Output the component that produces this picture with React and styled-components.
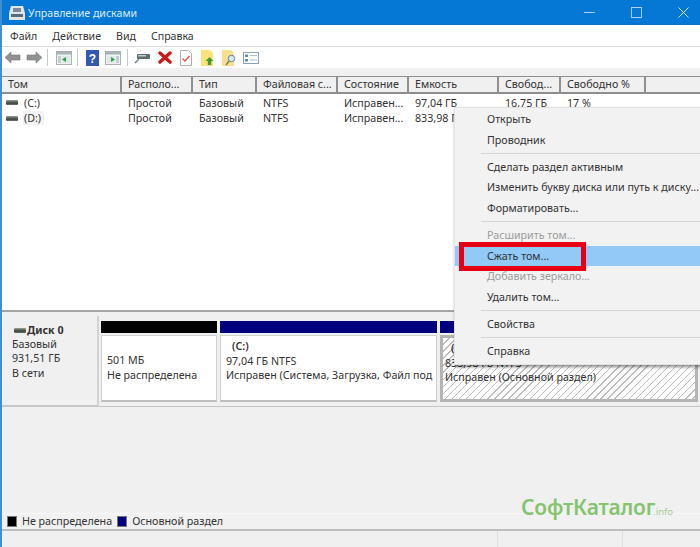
import React from "react";
import styled, { createGlobalStyle } from "styled-components";

const GlobalStyle = createGlobalStyle`
  html, body { margin: 0; padding: 0; background: #f0f0f0; }
  body { font-family: "Noto Sans", "Open Sans", "Liberation Sans", sans-serif; }
`;

const Window = styled.div`
  position: relative;
  width: 700px;
  height: 547px;
  overflow: hidden;
  display: flex;
  flex-direction: column;
  box-sizing: border-box;
  border-left: 2px solid #3f8fd2;
  background: #f0f0f0;
  color: #333;
  font-size: 10.7px;
`;

const TitleBar = styled.div`
  height: 25px;
  margin: 0 -6px 0 -2px;
  flex: none;
  background: #0478d4;
  color: #dcecf9;
  display: flex;
  align-items: center;
  padding-left: 8px;
  gap: 2px;
  font-size: 10.6px;
`;
const TitleText = styled.div`
  flex: 1;
`;
const WinButton = styled.div`
  width: 45px;
  height: 25px;
  display: flex;
  align-items: center;
  justify-content: center;
`;

const MenuBar = styled.div`
  height: 21px;
  flex: none;
  background: #fff;
  display: flex;
  align-items: center;
  padding-left: 8px;
  gap: 15px;
  font-size: 10.6px;
  border-bottom: 1px solid #dadada;
`;

const Toolbar = styled.div`
  height: 21px;
  flex: none;
  background: #fff;
  display: flex;
  align-items: center;
`;
const Tool = styled.div`
  width: ${(p) => p.$w}px;
  height: 20px;
  flex: none;
  display: flex;
  align-items: center;
  justify-content: center;
`;
const ToolSep = styled.div`
  width: 1px;
  height: 17px;
  flex: none;
  margin: 0 5px 0 2px;
  background: #c8c8c8;
`;

const Gap = styled.div`
  height: 8px;
  flex: none;
  background: #f0f0f0;
`;

const TableHead = styled.div`
  height: 18px;
  flex: none;
  display: flex;
  background: #f0f0f0;
  border-top: 1px solid #8f8f8f;
  border-bottom: 2px solid #8f8f8f;
  box-sizing: border-box;
`;
const HeadCell = styled.div`
  width: ${(p) => p.$w}px;
  box-sizing: border-box;
  padding-left: 6px;
  border-right: 2px solid #8f8f8f;
  line-height: 15px;
  white-space: nowrap;
  overflow: hidden;
`;

const TableBody = styled.div`
  height: 216px;
  flex: none;
  background: #fff;
  padding-top: 1px;
  box-sizing: border-box;
`;
const Row = styled.div`
  height: 15.5px;
  display: flex;
  align-items: center;
`;
const Cell = styled.div`
  width: ${(p) => p.$w}px;
  box-sizing: border-box;
  padding-left: 6px;
  white-space: nowrap;
  overflow: hidden;
  flex: none;
`;
const VolumeCell = styled(Cell)`
  display: flex;
  align-items: center;
  padding-left: 4px;
  gap: 5px;
`;
const VolumeName = styled.span`
  padding: 0 3px 0 1px;
  background: ${(p) => (p.$selected ? "#f3f3f3" : "transparent")};
`;
const DriveIcon = styled.span`
  display: inline-block;
  width: 12px;
  height: 5px;
  flex: none;
  border-radius: 1px;
  background: linear-gradient(#9aa39a, #3c443c 60%, #6b736b);
`;

const Splitter = styled.div`
  height: 6px;
  flex: none;
  background: #f0f0f0;
  border-top: 2px solid #a5a5a5;
  box-sizing: border-box;
`;

const DiskArea = styled.div`
  flex: 1;
  display: flex;
  flex-direction: column;
  background: #f0f0f0;
`;
const DiskRow = styled.div`
  display: flex;
  height: 91px;
  flex: none;
  border-bottom: 1px solid #c4c4c4;
  box-sizing: border-box;
`;
const DiskInfo = styled.div`
  width: 97px;
  flex: none;
  box-sizing: border-box;
  padding: 7px 0 0 10px;
  line-height: 14.2px;
  background: #f0f0f0;
  border-right: 2px solid #d2d2d2;
  border-bottom: 2px solid #c6c6c6;
  margin-bottom: -1px;
`;
const DiskTitle = styled.div`
  display: flex;
  align-items: center;
  gap: 1px;
  font-weight: 700;
  margin-left: 2px;
`;
const Partitions = styled.div`
  flex: 1;
  display: flex;
  gap: 3px;
  padding: 5px 0 0 2px;
  overflow: hidden;
`;
const Partition = styled.div`
  width: ${(p) => p.$w}px;
  flex: none;
  display: flex;
  flex-direction: column;
`;
const PartitionBar = styled.div`
  height: 12px;
  flex: none;
  background: ${(p) => p.$color};
`;
const PartitionBox = styled.div`
  height: 67px;
  margin-top: 2px;
  box-sizing: border-box;
  padding: ${(p) => (p.$top ? "3px" : "17px")} 0 0 5px;
  line-height: 14.5px;
  white-space: nowrap;
  overflow: hidden;
  border: 1px solid #cfcfcf;
  border-bottom: 2px solid #bdbdbd;
  background: #fff;
`;
const HatchedBox = styled(PartitionBox)`
  border: 3px solid #b4b4b4;
  padding-left: 2px;
  background: repeating-linear-gradient(
    135deg,
    #fff 0,
    #fff 4px,
    #bcbcbc 4px,
    #bcbcbc 5px
  );
`;
const BoxLabel = styled.div`
  padding-left: 6px;
  font-weight: 600;
`;

const Legend = styled.div`
  height: 18px;
  flex: none;
  margin-top: auto;
  display: flex;
  align-items: center;
  padding: 0 0 1px 5px;
  gap: 5px;
  background: #f1f1f1;
  border-top: 1px solid #f7f7f7;
  border-bottom: 2px solid #bdbdbd;
  box-sizing: border-box;
`;
const Swatch = styled.span`
  width: 10px;
  height: 11px;
  background: ${(p) => p.$color};
  border: 1px solid #777;
  box-sizing: border-box;
`;
const StatusBar = styled.div`
  height: 16px;
  flex: none;
  display: flex;
  justify-content: flex-end;
  background: #f0f0f0;
`;
const StatusCell = styled.div`
  width: ${(p) => p.$w}px;
  border-left: 1px solid #dedede;
  box-sizing: border-box;
`;

/* overlays */
const ContextMenu = styled.div`
  position: absolute;
  left: 452px;
  top: 107px;
  width: 260px;
  height: 258px;
  box-sizing: border-box;
  padding-top: 1px;
  background: #f2f2f2;
  border: 1px solid #e2e2e2;
  box-shadow: 1px 2px 3px rgba(0, 0, 0, 0.45);
`;
const MenuItem = styled.div`
  height: 20.6px;
  line-height: 20px;
  padding-left: 32px;
  white-space: nowrap;
  color: ${(p) => (p.$disabled ? "#9c9c9c" : "#333")};
  background: ${(p) => (p.$active ? "#91c9f7" : "transparent")};
`;
const MenuSep = styled.div`
  height: 1px;
  margin: 3px 0 2.5px 26px;
  background: #d4d4d4;
`;
const RedFrame = styled.div`
  position: absolute;
  left: 457px;
  top: 242px;
  width: 127px;
  height: 29px;
  box-sizing: border-box;
  border: 5px solid #e60012;
`;
const Watermark = styled.div`
  position: absolute;
  left: 519px;
  top: 493px;
  color: #85c46e;
  font-size: 21px;
  font-weight: 600;
  letter-spacing: -0.2px;
  white-space: nowrap;
`;
const WatermarkSmall = styled.span`
  margin-left: -2px;
  font-size: 9.5px;
  font-weight: 400;
  letter-spacing: 0;
  color: #a5c99a;
`;

const columns = [120, 71, 64, 81, 71, 90, 62, 85];
const headers = ["Том", "Располо...", "Тип", "Файловая с...", "Состояние", "Емкость", "Свобод...", "Свободно %"];
const rows = [
  { name: "(C:)", cap: "97,04 ГБ", free: "16,75 ГБ", pct: "17 %" },
  { name: "(D:)", cap: "833,98 ГБ", free: "", pct: "", selected: true },
];

const menu = [
  { t: "Открыть" }, { t: "Проводник" }, { sep: true },
  { t: "Сделать раздел активным" },
  { t: "Изменить букву диска или путь к диску..." },
  { t: "Форматировать..." }, { sep: true },
  { t: "Расширить том...", off: true },
  { t: "Сжать том...", active: true },
  { t: "Добавить зеркало...", off: true },
  { t: "Удалить том..." }, { sep: true },
  { t: "Свойства" }, { sep: true },
  { t: "Справка" },
];

const Arrow = ({ flip }) => (
  <svg width="17" height="13" viewBox="0 0 17 13" style={flip ? { transform: "scaleX(-1)" } : undefined}>
    <path d="M1 6.5 7 1v3h9v5H7v3z" fill="#8f938f" stroke="#777" strokeWidth=".6" />
  </svg>
);
const Panel = ({ bar, right }) => (
  <svg width="16" height="14" viewBox="0 0 16 14">
    <rect x=".5" y=".5" width="15" height="13" fill="#eef2f2" stroke="#a9b0b0" />
    <rect x="1" y="1" width="14" height="2.5" fill="#a9b4b8" />
    <rect x={right ? 11 : 2} y="5" width="3" height="7" fill="#c3cdd0" />
    <rect x={right ? 2 : 6} y="5" width="8" height="7" fill="#dfe8e4" />
    <path d={right ? "M6 6l4 2.5L6 11z" : "M10 6 6 8.5l4 2.5z"} fill={bar} />
  </svg>
);
const Help = () => (
  <svg width="13" height="16" viewBox="0 0 13 16">
    <rect width="13" height="16" fill="#3558b0" />
    <text x="6.5" y="12.5" fontSize="12" fontWeight="700" fill="#fff" textAnchor="middle" fontFamily="Liberation Sans">?</text>
  </svg>
);
const Rescan = () => (
  <svg width="16" height="13" viewBox="0 0 16 13">
    <path d="M1 12 5 8" stroke="#7c8a8a" strokeWidth="1.6" />
    <rect x="3" y="3" width="13" height="5" rx="1" fill="#5e6c6c" />
    <rect x="4" y="4" width="8" height="1.5" fill="#b7d0d8" />
  </svg>
);
const Cross = () => (
  <svg width="14" height="13" viewBox="0 0 14 13">
    <path d="M2 2l10 9M12 2 2 11" stroke="#cc1717" strokeWidth="3.4" strokeLinecap="round" />
  </svg>
);
const Check = () => (
  <svg width="12" height="16" viewBox="0 0 12 16">
    <path d="M.5.5h8l3 3v12H.5z" fill="#fff" stroke="#b0b0b0" />
    <path d="M2.5 8.5 5 11l4.5-5" stroke="#d9534a" strokeWidth="1.3" fill="none" />
  </svg>
);
const FolderUp = () => (
  <svg width="14" height="16" viewBox="0 0 14 16">
    <path d="M0 0h9l3 3v13H0z" fill="#fbe27a" />
    <path d="M8.5 7l4 4h-2.3v4H6.8v-4H4.5z" fill="#3f9a2f" />
  </svg>
);
const FolderSearch = () => (
  <svg width="15" height="16" viewBox="0 0 15 16">
    <path d="M0 0h9l3 3v13H0z" fill="#f8e08e" />
    <circle cx="9.5" cy="8.5" r="3.2" fill="#d9ecf4" stroke="#5f7f94" />
    <path d="M7 11l-3 4" stroke="#7a8a5a" strokeWidth="1.6" />
  </svg>
);
const Props = () => (
  <svg width="16" height="12" viewBox="0 0 16 12">
    <rect x=".5" y=".5" width="15" height="11" fill="#fff" stroke="#8aa2b8" />
    <rect x="2" y="2.5" width="3" height="2.5" fill="#5b8dc4" />
    <rect x="2" y="7" width="3" height="2.5" fill="#5b8dc4" />
    <path d="M7 3.5h7M7 8h7" stroke="#b4bcc4" />
  </svg>
);

const App = () => (
  <Window>
    <GlobalStyle />
    <TitleBar>
      <svg width="18" height="16" viewBox="0 0 18 16">
        <path d="M3 1h12l2 7v7H1V8z" fill="#dfe6ea" />
        <rect x="3" y="9" width="12" height="3" fill="#5a6b78" />
        <rect x="5" y="3" width="8" height="4" fill="#7d8b96" />
      </svg>
      <TitleText>Управление дисками</TitleText>
      <WinButton>
        <svg width="11" height="11" viewBox="0 0 11 11"><path d="M0 5.5h11" stroke="#a9d2f2" /></svg>
      </WinButton>
      <WinButton>
        <svg width="11" height="11" viewBox="0 0 11 11"><rect x=".5" y=".5" width="10" height="10" fill="none" stroke="#a9d2f2" /></svg>
      </WinButton>
      <WinButton>
        <svg width="11" height="11" viewBox="0 0 11 11"><path d="M.5.5l10 10M10.5.5l-10 10" stroke="#cfe5f7" /></svg>
      </WinButton>
    </TitleBar>
    <MenuBar>
      <span>Файл</span><span>Действие</span><span>Вид</span><span>Справка</span>
    </MenuBar>
    <Toolbar>
      <Tool $w={21}><Arrow /></Tool>
      <Tool $w={22}><Arrow flip /></Tool>
      <ToolSep />
      <Tool $w={22}><Panel bar="#2fa04a" /></Tool>
      <ToolSep />
      <Tool $w={18}><Help /></Tool>
      <Tool $w={24}><Panel bar="#2fa04a" right /></Tool>
      <ToolSep />
      <Tool $w={18}><Rescan /></Tool>
      <Tool $w={27}><Cross /></Tool>
      <Tool $w={16}><Check /></Tool>
      <Tool $w={27}><FolderUp /></Tool>
      <Tool $w={17}><FolderSearch /></Tool>
      <Tool $w={25}><Props /></Tool>
    </Toolbar>
    <Gap />
    <TableHead>
      {headers.map((h, i) => (
        <HeadCell key={h} $w={columns[i]}>{h}</HeadCell>
      ))}
    </TableHead>
    <TableBody>
      {rows.map((r) => (
        <Row key={r.name}>
          <VolumeCell $w={columns[0]}>
            <DriveIcon />
            <VolumeName $selected={r.selected}>{r.name}</VolumeName>
          </VolumeCell>
          <Cell $w={columns[1]}>Простой</Cell>
          <Cell $w={columns[2]}>Базовый</Cell>
          <Cell $w={columns[3]}>NTFS</Cell>
          <Cell $w={columns[4]}>Исправен...</Cell>
          <Cell $w={columns[5]}>{r.cap}</Cell>
          <Cell $w={columns[6]}>{r.free}</Cell>
          <Cell $w={columns[7]}>{r.pct}</Cell>
        </Row>
      ))}
    </TableBody>
    <Splitter />
    <DiskArea>
      <DiskRow>
        <DiskInfo>
          <DiskTitle><DriveIcon />Диск 0</DiskTitle>
          <div>Базовый</div>
          <div>931,51 ГБ</div>
          <div>В сети</div>
        </DiskInfo>
        <Partitions>
          <Partition $w={116}>
            <PartitionBar $color="#000" />
            <PartitionBox>
              <div>501 МБ</div>
              <div>Не распределена</div>
            </PartitionBox>
          </Partition>
          <Partition $w={217}>
            <PartitionBar $color="#00007f" />
            <PartitionBox $top>
              <BoxLabel>(C:)</BoxLabel>
              <div>97,04 ГБ NTFS</div>
              <div>Исправен (Система, Загрузка, Файл под</div>
            </PartitionBox>
          </Partition>
          <Partition $w={258}>
            <PartitionBar $color="#00007f" />
            <HatchedBox $top>
              <BoxLabel>(D:)</BoxLabel>
              <div>833,98 ГБ NTFS</div>
              <div>Исправен (Основной раздел)</div>
            </HatchedBox>
          </Partition>
        </Partitions>
      </DiskRow>
      <Legend>
        <Swatch $color="#000" />
        <span>Не распределена</span>
        <Swatch $color="#00007f" />
        <span>Основной раздел</span>
      </Legend>
    </DiskArea>
    <StatusBar>
      <StatusCell $w={125} />
      <StatusCell $w={78} />
    </StatusBar>
    <ContextMenu>
      {menu.map((m, i) =>
        m.sep ? (
          <MenuSep key={i} />
        ) : (
          <MenuItem key={m.t} $disabled={m.off} $active={m.active}>{m.t}</MenuItem>
        )
      )}
    </ContextMenu>
    <RedFrame />
    <Watermark>СофтКаталог<WatermarkSmall>.info</WatermarkSmall></Watermark>
  </Window>
);

export default App;
